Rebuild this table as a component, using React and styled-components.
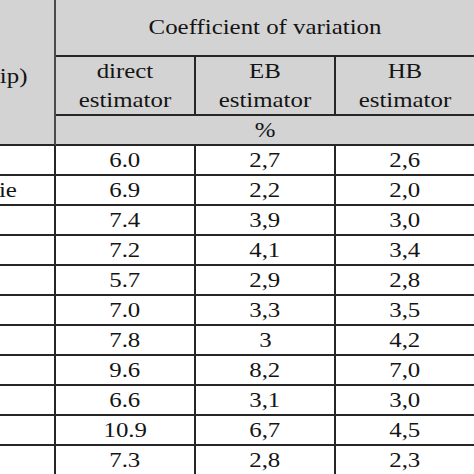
import React from "react";
import styled, { createGlobalStyle } from "styled-components";

const Global = createGlobalStyle`
  html, body {
    margin: 0;
    padding: 0;
    background: #fff;
    overflow: hidden;
  }
`;

const Table = styled.div`
  display: grid;
  grid-template-columns: 56px 140px 140px 140px;
  grid-template-rows: 57px 59px 30px repeat(11, 30px);
  width: 476px;
  font-family: "Liberation Serif", "Times New Roman", serif;
  font-size: 22px;
  color: #141414;
`;

const Cell = styled.div`
  box-sizing: border-box;
  display: flex;
  align-items: center;
  justify-content: center;
  text-align: center;
  line-height: 1.3;
  white-space: nowrap;
  overflow: hidden;
  background: ${(p) => (p.$head ? "#d3d3d3" : "#fff")};
  border-right: 2px solid ${(p) => p.$edge || "#262626"};
  border-bottom: 2px solid #262626;
  grid-column: ${(p) => p.$col};
  grid-row: ${(p) => p.$row};
  padding-top: ${(p) => p.$top || 0}px;
`;

const Stub = styled(Cell)`
  justify-content: flex-end;
  padding-right: ${(p) => p.$pad}px;
`;

const Text = styled.span`
  display: inline-block;
  transform: scaleX(1.13);
`;

const StubText = styled.span`
  display: inline-block;
  transform: scaleX(1.13);
  transform-origin: right center;
`;

const rows = [
  ["6.0", "2,7", "2,6"],
  ["6.9", "2,2", "2,0"],
  ["7.4", "3,9", "3,0"],
  ["7.2", "4,1", "3,4"],
  ["5.7", "2,9", "2,8"],
  ["7.0", "3,3", "3,5"],
  ["7.8", "3", "4,2"],
  ["9.6", "8,2", "7,0"],
  ["6.6", "3,1", "3,0"],
  ["10.9", "6,7", "4,5"],
  ["7.3", "2,8", "2,3"],
];

const stubs = { 1: { text: "ie", pad: 37 } };

export default function App() {
  return (
    <>
      <Global />
      <Table>
        <Stub $head $col="1" $row="1 / 4" $pad={27} $top={8} $edge="#4a4a4a">
          <StubText>ip)</StubText>
        </Stub>
        <Cell $head $col="2 / 5" $row="1">
          <Text>Coefficient of variation</Text>
        </Cell>
        <Cell $head $col="2" $row="2">
          <Text>
            direct
            <br />
            estimator
          </Text>
        </Cell>
        <Cell $head $col="3" $row="2">
          <Text>
            EB
            <br />
            estimator
          </Text>
        </Cell>
        <Cell $head $col="4" $row="2">
          <Text>
            HB
            <br />
            estimator
          </Text>
        </Cell>
        <Cell $head $col="2 / 5" $row="3">
          <Text>%</Text>
        </Cell>
        {rows.map((r, i) => {
          const row = String(i + 4);
          const s = stubs[i];
          return (
            <React.Fragment key={i}>
              <Stub $col="1" $row={row} $pad={s ? s.pad : 0}>
                {s ? <StubText>{s.text}</StubText> : null}
              </Stub>
              {r.map((v, j) => (
                <Cell key={j} $col={String(j + 2)} $row={row}>
                  <Text>{v}</Text>
                </Cell>
              ))}
            </React.Fragment>
          );
        })}
      </Table>
    </>
  );
}
